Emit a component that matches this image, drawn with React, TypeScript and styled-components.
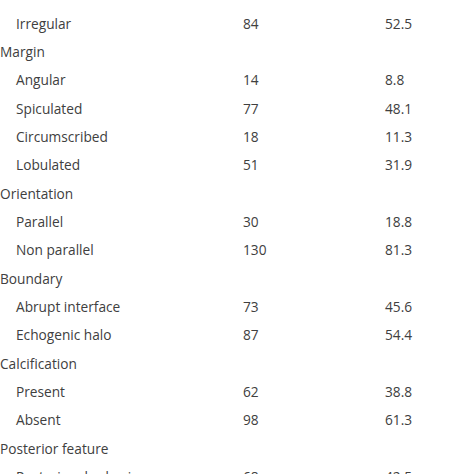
import styled, { createGlobalStyle } from "styled-components";

const GlobalStyle = createGlobalStyle`
  html, body {
    margin: 0;
    padding: 0;
    background: #ffffff;
    overflow: hidden;
  }
`;

interface IRow {
  label: string;
  n?: string;
  pct?: string;
  sub?: boolean;
}

const rows: IRow[] = [
  { label: "Irregular", n: "84", pct: "52.5", sub: true },
  { label: "Margin" },
  { label: "Angular", n: "14", pct: "8.8", sub: true },
  { label: "Spiculated", n: "77", pct: "48.1", sub: true },
  { label: "Circumscribed", n: "18", pct: "11.3", sub: true },
  { label: "Lobulated", n: "51", pct: "31.9", sub: true },
  { label: "Orientation" },
  { label: "Parallel", n: "30", pct: "18.8", sub: true },
  { label: "Non parallel", n: "130", pct: "81.3", sub: true },
  { label: "Boundary" },
  { label: "Abrupt interface", n: "73", pct: "45.6", sub: true },
  { label: "Echogenic halo", n: "87", pct: "54.4", sub: true },
  { label: "Calcification" },
  { label: "Present", n: "62", pct: "38.8", sub: true },
  { label: "Absent", n: "98", pct: "61.3", sub: true },
  { label: "Posterior feature" },
  { label: "Posterior shadowing", n: "68", pct: "42.5", sub: true },
];

export default function App() {
  return (
    <>
      <GlobalStyle />
      <Table>
        {rows.map((row) => (
          <Row key={row.label}>
            <Label $sub={!!row.sub}>{row.label}</Label>
            <Cell>{row.n}</Cell>
            <Cell>{row.pct}</Cell>
          </Row>
        ))}
      </Table>
    </>
  );
}

const Table = styled.div`
  width: 474px;
  height: 474px;
  overflow: hidden;
  padding-top: 9px;
  box-sizing: border-box;
  font-family: "Open Sans", "Noto Sans", sans-serif;
  font-size: 13.7px;
  color: #404040;
`;

const Row = styled.div`
  display: grid;
  grid-template-columns: 243px 142px 1fr;
  align-items: center;
  height: 28.35px;
  white-space: nowrap;
`;

const Label = styled.div<{ $sub: boolean }>`
  padding-left: ${({ $sub }) => ($sub ? "16px" : "0")};
`;

const Cell = styled.div``;
